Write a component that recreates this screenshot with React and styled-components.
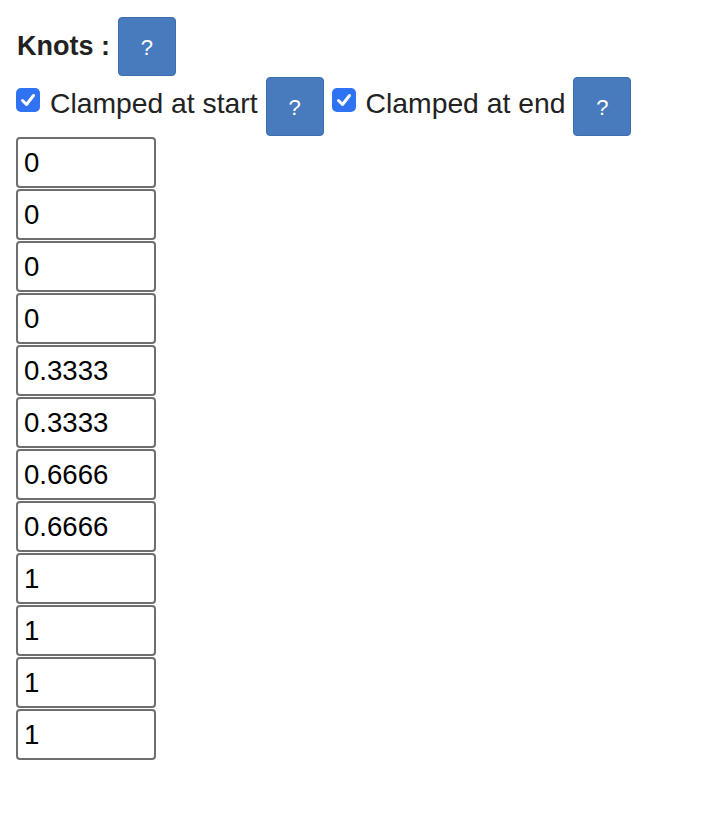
import React from 'react';
import styled, { createGlobalStyle } from 'styled-components';

const GlobalStyle = createGlobalStyle`
  body {
    margin: 0;
    background: #fff;
    font-family: "Liberation Sans", Arial, Helvetica, sans-serif;
    color: #222;
  }
`;

const Page = styled.div`
  padding: 17px 0 0 16px;
  display: flex;
  flex-direction: column;
  align-items: flex-start;
`;

const Row = styled.div`
  display: flex;
  align-items: center;
  gap: 8px;
  margin-bottom: 1px;
`;

const Title = styled.span`
  padding-left: 1px;
  font-size: 27px;
  font-weight: bold;
  color: #222;
`;

const HelpButton = styled.button`
  display: inline-flex;
  align-items: center;
  justify-content: center;
  width: 58px;
  height: 59px;
  padding: 3px 0 0;
  border: 1px solid #3d6eab;
  border-radius: 4px;
  background-color: #477bbd;
  color: #fff;
  font-family: "Liberation Sans", Arial, sans-serif;
  font-size: 22px;
  line-height: 1;
  cursor: pointer;
`;

const CheckLabel = styled.label`
  display: flex;
  align-items: center;
  gap: 10px;
  font-size: 28.3px;
  color: #222;
  margin-bottom: 6px;
`;

const Box = styled.span`
  width: 24px;
  height: 24px;
  border-radius: 5px;
  background-color: #2f72f2;
  display: inline-flex;
  align-items: center;
  justify-content: center;
  margin-top: -7px;
`;

const HiddenInput = styled.input`
  position: absolute;
  opacity: 0;
  width: 0;
  height: 0;
  margin: 0;
`;

const KnotList = styled.div`
  display: flex;
  flex-direction: column;
  gap: 1px;
`;

const KnotInput = styled.input`
  box-sizing: border-box;
  width: 140px;
  height: 51px;
  padding: 0 6px;
  border: 2px solid #6e6e6e;
  border-radius: 4px;
  font-family: "Liberation Sans", Arial, sans-serif;
  font-size: 27.6px;
  color: #000;
  background: #fff;
`;

function Checkbox({ label, checked }) {
  return (
    <CheckLabel>
      <HiddenInput type="checkbox" defaultChecked={checked} />
      <Box>
        <svg width="18" height="18" viewBox="0 0 18 18">
          <path d="M3.5 9.5 L7.5 13.5 L14.5 4.5" fill="none" stroke="#fff" strokeWidth="3" strokeLinecap="round" strokeLinejoin="round" />
        </svg>
      </Box>
      {label}
    </CheckLabel>
  );
}

const knots = ['0', '0', '0', '0', '0.3333', '0.3333', '0.6666', '0.6666', '1', '1', '1', '1'];

export default function App() {
  return (
    <>
      <GlobalStyle />
      <Page>
        <Row>
          <Title>Knots :</Title>
          <HelpButton>?</HelpButton>
        </Row>
        <Row>
          <Checkbox label="Clamped at start" checked />
          <HelpButton>?</HelpButton>
          <Checkbox label="Clamped at end" checked />
          <HelpButton>?</HelpButton>
        </Row>
        <KnotList>
          {knots.map((k, i) => (
            <KnotInput key={i} type="text" defaultValue={k} />
          ))}
        </KnotList>
      </Page>
    </>
  );
}
